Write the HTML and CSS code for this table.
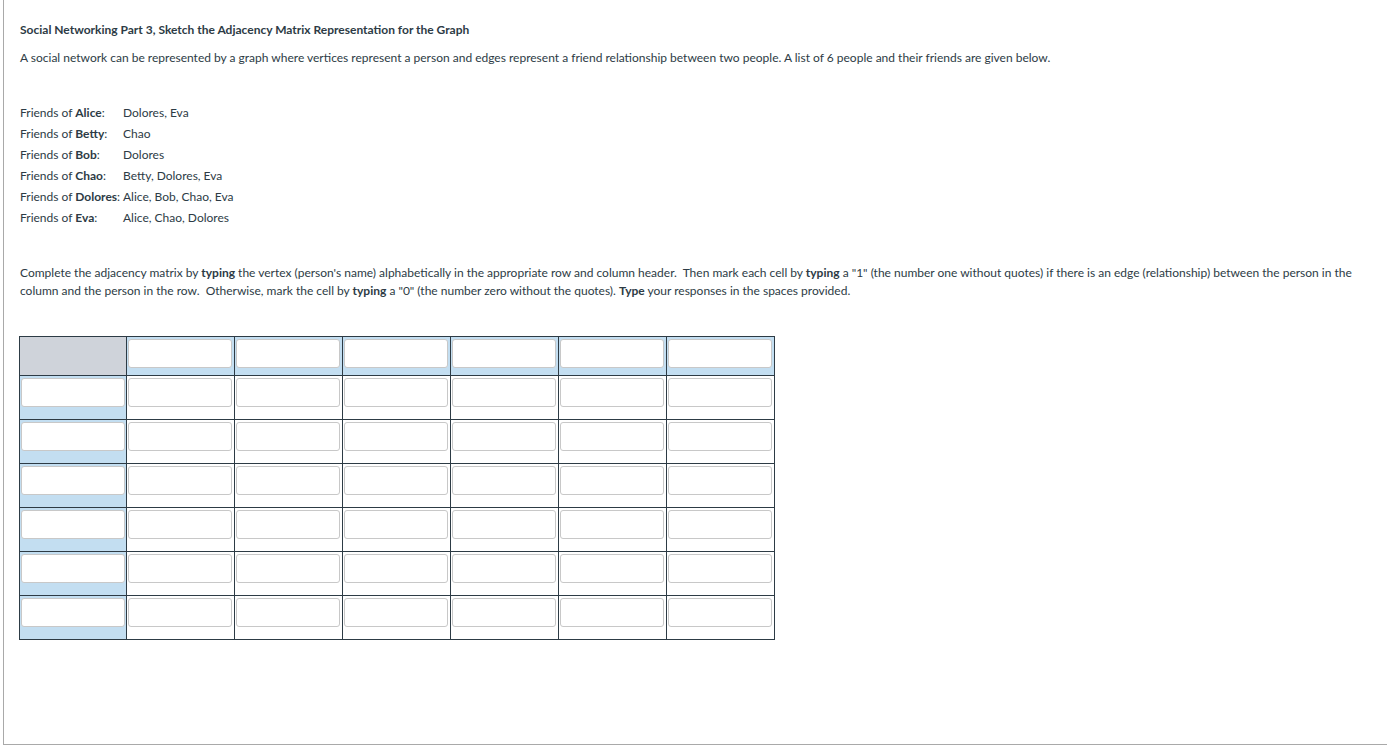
FILE: index.html
```html
<!DOCTYPE html>
<html>
<head>
<meta charset="utf-8">
<link rel="stylesheet" href="styles.css">
</head>
<body>
<div class="frame">
  <div class="content">
    <p class="title">Social Networking Part 3, Sketch the Adjacency Matrix Representation for the Graph</p>
    <p class="intro">A social network can be represented by a graph where vertices represent a person and edges represent a friend relationship between two people. A list of 6 people and their friends are given below.</p>
    <table class="friends">
      <tr><td class="lbl">Friends of <b>Alice</b>:</td><td>Dolores, Eva</td></tr>
      <tr><td class="lbl">Friends of <b>Betty</b>:</td><td>Chao</td></tr>
      <tr><td class="lbl">Friends of <b>Bob</b>:</td><td>Dolores</td></tr>
      <tr><td class="lbl">Friends of <b>Chao</b>:</td><td>Betty, Dolores, Eva</td></tr>
      <tr><td class="lbl">Friends of <b>Dolores</b>:</td><td>Alice, Bob, Chao, Eva</td></tr>
      <tr><td class="lbl">Friends of <b>Eva</b>:</td><td>Alice, Chao, Dolores</td></tr>
    </table>
    <p class="instr">Complete the adjacency matrix by <b>typing</b> the vertex (person's name) alphabetically in the appropriate row and column header.&nbsp; Then mark each cell by <b>typing</b> a "1" (the number one without quotes) if there is an edge (relationship) between the person in the column and the person in the row.&nbsp; Otherwise, mark the cell by <b>typing</b> a "0" (the number zero without the quotes). <b>Type</b> your responses in the spaces provided.</p>
    <table class="matrix">
      <tr class="hrow">
        <td class="corner"></td>
        <td class="hcell"><input class="box" type="text"></td>
        <td class="hcell"><input class="box" type="text"></td>
        <td class="hcell"><input class="box" type="text"></td>
        <td class="hcell"><input class="box" type="text"></td>
        <td class="hcell"><input class="box" type="text"></td>
        <td class="hcell"><input class="box" type="text"></td>
      </tr>
      <tr class="brow">
        <td class="hcell"><input class="box" type="text"></td>
        <td class="cell"><input class="box" type="text"></td>
        <td class="cell"><input class="box" type="text"></td>
        <td class="cell"><input class="box" type="text"></td>
        <td class="cell"><input class="box" type="text"></td>
        <td class="cell"><input class="box" type="text"></td>
        <td class="cell"><input class="box" type="text"></td>
      </tr>
      <tr class="brow">
        <td class="hcell"><input class="box" type="text"></td>
        <td class="cell"><input class="box" type="text"></td>
        <td class="cell"><input class="box" type="text"></td>
        <td class="cell"><input class="box" type="text"></td>
        <td class="cell"><input class="box" type="text"></td>
        <td class="cell"><input class="box" type="text"></td>
        <td class="cell"><input class="box" type="text"></td>
      </tr>
      <tr class="brow">
        <td class="hcell"><input class="box" type="text"></td>
        <td class="cell"><input class="box" type="text"></td>
        <td class="cell"><input class="box" type="text"></td>
        <td class="cell"><input class="box" type="text"></td>
        <td class="cell"><input class="box" type="text"></td>
        <td class="cell"><input class="box" type="text"></td>
        <td class="cell"><input class="box" type="text"></td>
      </tr>
      <tr class="brow">
        <td class="hcell"><input class="box" type="text"></td>
        <td class="cell"><input class="box" type="text"></td>
        <td class="cell"><input class="box" type="text"></td>
        <td class="cell"><input class="box" type="text"></td>
        <td class="cell"><input class="box" type="text"></td>
        <td class="cell"><input class="box" type="text"></td>
        <td class="cell"><input class="box" type="text"></td>
      </tr>
      <tr class="brow">
        <td class="hcell"><input class="box" type="text"></td>
        <td class="cell"><input class="box" type="text"></td>
        <td class="cell"><input class="box" type="text"></td>
        <td class="cell"><input class="box" type="text"></td>
        <td class="cell"><input class="box" type="text"></td>
        <td class="cell"><input class="box" type="text"></td>
        <td class="cell"><input class="box" type="text"></td>
      </tr>
      <tr class="brow">
        <td class="hcell"><input class="box" type="text"></td>
        <td class="cell"><input class="box" type="text"></td>
        <td class="cell"><input class="box" type="text"></td>
        <td class="cell"><input class="box" type="text"></td>
        <td class="cell"><input class="box" type="text"></td>
        <td class="cell"><input class="box" type="text"></td>
        <td class="cell"><input class="box" type="text"></td>
      </tr>
    </table>
  </div>
</div>
</body>
</html>
```

FILE: styles.css
```css
html, body {
  margin: 0;
  padding: 0;
  background: #fff;
}
body {
  font-family: Lato, "Liberation Sans", sans-serif;
  font-size: 12px;
  color: #2d3b45;
}
.frame {
  margin-left: 3px;
  height: 745px;
  border-left: 1px solid #a9a9a9;
  border-bottom: 1px solid #a9a9a9;
  box-sizing: border-box;
}
.content {
  padding: 21px 0 0 16px;
}
p {
  margin: 0;
  line-height: 18px;
}
.title {
  font-weight: bold;
  margin-bottom: 10px;
}
.intro {
  margin-bottom: 35px;
}
.friends {
  border-collapse: collapse;
  margin-bottom: 36px;
}
.friends td {
  padding: 0;
  height: 21px;
  line-height: 21px;
  vertical-align: middle;
  white-space: nowrap;
}
.friends .lbl {
  width: 103px;
}
.instr {
  width: 1340px;
  margin-bottom: 36px;
}
.matrix {
  border-collapse: collapse;
  table-layout: fixed;
  margin-left: -1px;
}
.matrix td {
  border: 1px solid #2d3b45;
  padding: 0;
  width: 108px;
  vertical-align: top;
  box-sizing: border-box;
}
.matrix td:first-child {
  width: 107px;
}
.hrow td {
  height: 39px;
}
.brow td {
  height: 44px;
}
.corner {
  background: #cfd3da;
}
.hcell {
  background: #c3def1;
}
.cell {
  background: #fff;
}
.box {
  display: block;
  box-sizing: border-box;
  width: 104px;
  height: 29px;
  margin: 2px 0 0 1px;
  padding: 0 6px;
  border: 1px solid #c8c8c8;
  border-radius: 3px;
  background: #fff;
  font-family: Lato, "Liberation Sans", sans-serif;
  font-size: 12px;
  color: #2d3b45;
  outline: none;
}
```
